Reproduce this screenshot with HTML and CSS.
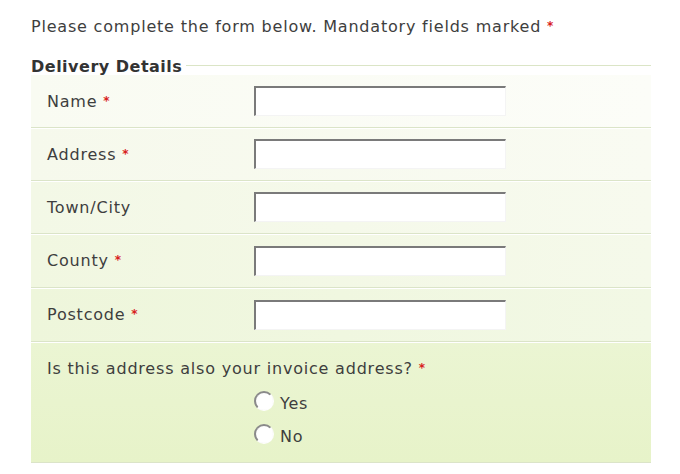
FILE: index.html
```
<!DOCTYPE html>
<html lang="en">
<head>
  <meta charset="UTF-8">
  <title>Delivery Details</title>
  <link rel="stylesheet" href="styles.css">
</head>
<body>
  <div class="page">
    <p class="intro">Please complete the form below. Mandatory fields marked <span class="req">*</span></p>
    <form class="delivery">
      <div class="legend">
        <span class="legend-text">Delivery Details</span>
        <span class="legend-line"></span>
      </div>
      <div class="row row-1">
        <label class="label">Name <span class="req">*</span></label>
        <input class="field" type="text">
      </div>
      <div class="row row-2">
        <label class="label">Address <span class="req">*</span></label>
        <input class="field" type="text">
      </div>
      <div class="row row-3">
        <label class="label">Town/City</label>
        <input class="field" type="text">
      </div>
      <div class="row row-4">
        <label class="label">County <span class="req">*</span></label>
        <input class="field" type="text">
      </div>
      <div class="row row-5">
        <label class="label">Postcode <span class="req">*</span></label>
        <input class="field" type="text">
      </div>
      <div class="row question">
        <div class="question-text">Is this address also your invoice address? <span class="req">*</span></div>
        <div class="choices">
          <label class="choice"><input class="radio" type="radio" name="invoice"> Yes</label>
          <label class="choice"><input class="radio" type="radio" name="invoice"> No</label>
        </div>
      </div>
    </form>
  </div>
</body>
</html>
```

FILE: styles.css
```
* {
  margin: 0;
  padding: 0;
  box-sizing: border-box;
}

body {
  font-family: 'DejaVu Sans', Verdana, sans-serif;
  font-size: 16px;
  letter-spacing: 0.8px;
  color: #3e3e3e;
  background: #fff;
}

.page {
  padding: 16px 0 0 31px;
  width: 651px;
}

.intro {
  line-height: 20px;
}

.req {
  color: #d8201c;
  font-size: 12px;
  font-weight: bold;
  letter-spacing: 0;
  vertical-align: 2px;
}

.legend {
  display: flex;
  align-items: center;
  margin-top: 20px;
  height: 18px;
}

.legend-text {
  font-weight: bold;
  color: #333;
  letter-spacing: 0.5px;
}

.legend-line {
  flex: 1;
  height: 1px;
  margin-left: 4px;
  margin-top: -2px;
  background: #dbe5c6;
}

.delivery {
  display: flex;
  flex-direction: column;
}

.row {
  display: flex;
  align-items: center;
  height: 53px;
  padding-left: 16px;
  border-bottom: 1px solid #dbe4c8;
  box-shadow: inset 0 1px 0 #fff;
}

.row-1 {
  background: linear-gradient(90deg, #f9fbf2, #fcfdf8);
  box-shadow: none;
}

.row-2 {
  background: linear-gradient(90deg, #f6f9ec, #f9fbf2);
}

.row-3 {
  background: linear-gradient(90deg, #f3f8e6, #f7faee);
}

.row-4 {
  height: 54px;
  background: linear-gradient(90deg, #f1f7e1, #f5f9ea);
}

.row-5 {
  height: 54px;
  background: linear-gradient(90deg, #eef6db, #f2f8e5);
}

.label {
  width: 207px;
}

.field {
  width: 252px;
  height: 30px;
  background: #fff;
  border-style: solid;
  border-width: 2px 1px 1px 2px;
  border-color: #7a7a7a #f4f4f4 #f4f4f4 #7a7a7a;
  font: inherit;
}

.question {
  flex-direction: column;
  align-items: stretch;
  height: 121px;
  padding: 16px 0 0 16px;
  background: linear-gradient(180deg, #ebf5d3, #e7f3c9);
}

.question-text {
  line-height: 20px;
}

.choices {
  display: flex;
  flex-direction: column;
  gap: 13px;
  margin: 15px 0 0 207px;
}

.choice {
  display: flex;
  align-items: center;
  gap: 6px;
  line-height: 20px;
}

.radio {
  appearance: none;
  width: 20px;
  height: 20px;
  margin-top: -7px;
  border-radius: 50%;
  background: radial-gradient(circle at 60% 60%, #fff 60%, #f3f3f3 100%);
  border: 2px solid;
  border-color: #8a8a8a transparent transparent #8a8a8a;
}
```
